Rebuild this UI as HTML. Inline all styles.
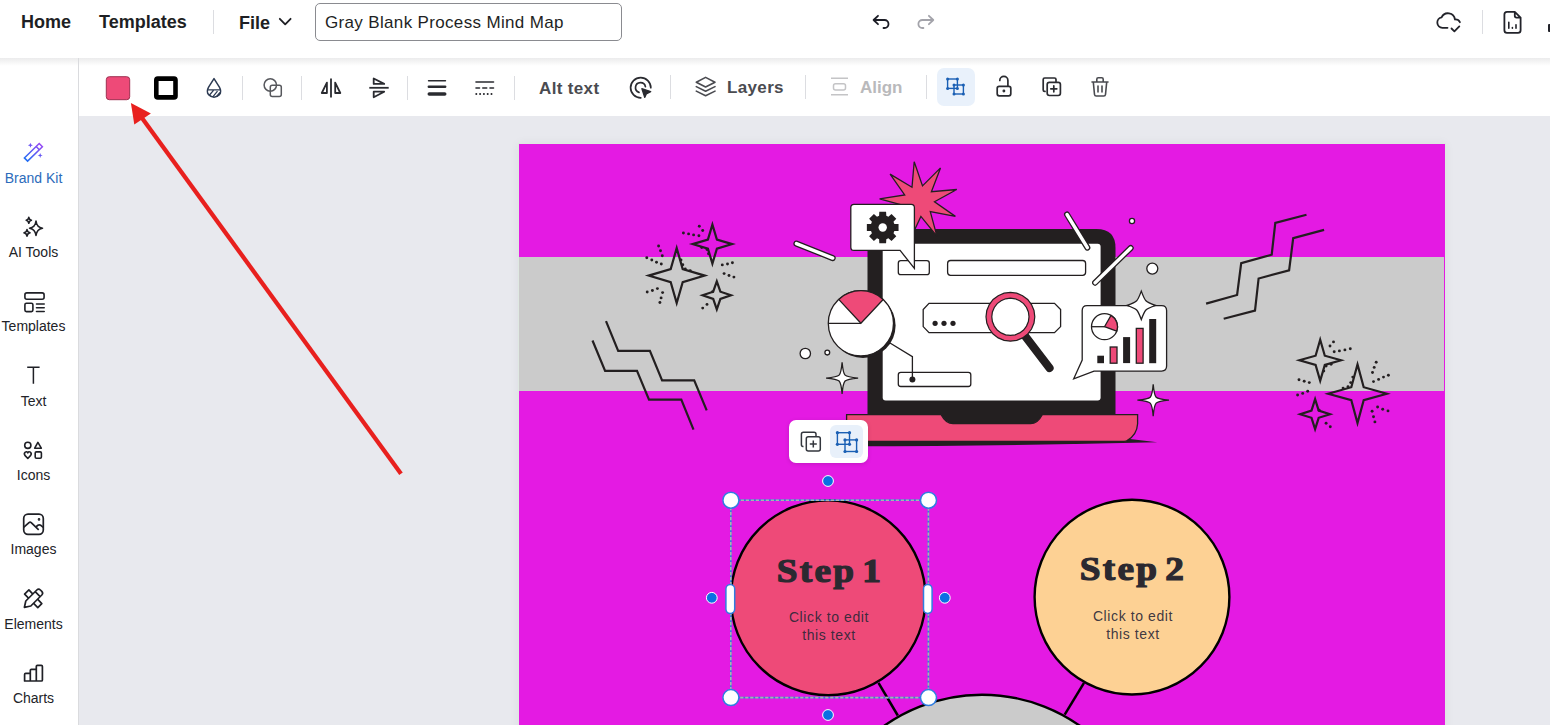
<!DOCTYPE html>
<html><head><meta charset="utf-8">
<style>
*{margin:0;padding:0;box-sizing:border-box}
html,body{width:1550px;height:725px;overflow:hidden;background:#e8e9ee;font-family:"Liberation Sans",sans-serif;position:relative}
.abs{position:absolute}
#top{left:0;top:0;width:1550px;height:58px;background:#fff;z-index:20}
#side{left:0;top:58px;width:79px;height:667px;background:#fff;z-index:19}
#tool{left:79px;top:58px;width:1471px;height:58px;background:#fff;z-index:18}
.nav{font-weight:bold;font-size:18px;color:#1e1f24;top:12px}
.sep{background:#dcdde1;width:1px}
#title{left:315px;top:3px;width:307px;height:38px;border:1px solid #8a8b90;border-radius:5px;font-size:17px;color:#1e1f24;padding-left:9px;line-height:38px;letter-spacing:0.34px}
.lbl{width:67px;text-align:center;font-size:14px;color:#222328;left:0}
.tt{font-weight:bold;font-size:17px;color:#4a4b50;letter-spacing:0.35px}
.stxt{font-family:"Liberation Serif",serif;font-weight:bold;font-size:33px;letter-spacing:2px;word-spacing:-5px;-webkit-text-stroke:1.2px #2b2930;transform:scaleX(1.13);color:#2b2930;text-align:center;width:200px}
.ctxt{font-size:14px;letter-spacing:0.6px;color:rgba(40,38,54,0.9);text-align:center;width:200px;line-height:18px}
</style></head><body>
<div class="abs" style="left:519px;top:144px;width:926px;height:600px;box-shadow:0 0 10px rgba(40,40,60,0.07)"></div>

<svg class="abs" style="left:0;top:0" width="1550" height="725" viewBox="0 0 1550 725">
<defs><clipPath id="ab"><rect x="519" y="144" width="926" height="581"/></clipPath></defs>
<rect x="518.5" y="143.5" width="927" height="590" fill="none" stroke="#dfe8e2" stroke-width="1"/>
<g clip-path="url(#ab)">
<rect x="519" y="144" width="926" height="581" fill="#e41ae3"/>
<rect x="519" y="257" width="925" height="134" fill="#cbcbcb"/>
<!-- zigzags left -->
<g fill="none" stroke="#231f20" stroke-width="2.2" stroke-linejoin="miter">
<path d="M606 321.1 L618.2 350.9 L649.9 350.9 L662.1 380.4 L694.2 380.4 L706.7 410.4"/>
<path d="M592.5 340.5 L605.1 370.9 L637 370.9 L649 399.6 L681.3 399.6 L693.5 429.7"/>
<path d="M1206.1 303.6 L1237.1 295 L1241.2 263.1 L1271.7 254.7 L1275.3 222.9 L1306.5 214.7"/>
<path d="M1223.7 318.8 L1255 310.6 L1258.6 278.5 L1289.1 270.4 L1293.2 238.2 L1324.1 229.9"/>
</g>
<!-- sparkles left -->
<g fill="none" stroke="#231f20" stroke-width="2.2" stroke-linejoin="miter">
<path d="M676.7 248.1 L682.7 269.1 L704.7 275.6 L682.7 282.1 L676.7 303.1 L670.7 282.1 L648.7 275.6 L670.7 269.1Z"/>
<path d="M712.4 224.6 L716.9 239.6 L732.1 244.1 L716.9 248.6 L712.4 263.6 L707.9 248.6 L692.7 244.1 L707.9 239.6Z"/>
<path d="M716.8 281.3 L720.4 291.7 L731.0 295.3 L720.4 298.9 L716.8 309.3 L713.2 298.9 L702.6 295.3 L713.2 291.7Z"/>
<path d="M1320.2 339.8 L1324.8 355.7 L1341.0 360.3 L1324.8 364.9 L1320.2 380.8 L1315.6 364.9 L1299.4 360.3 L1315.6 355.7Z"/>
<path d="M1357.5 364.4 L1363.7 387.2 L1386.8 393.7 L1363.7 400.2 L1357.5 423.0 L1351.3 400.2 L1328.2 393.7 L1351.3 387.2Z"/>
<path d="M1315.1 399.2 L1318.7 410.6 L1330.0 414.2 L1318.7 417.8 L1315.1 429.2 L1311.5 417.8 L1300.2 414.2 L1311.5 410.6Z"/>
</g>
<g fill="#231f20"><circle cx="683.4" cy="233.0" r="1.45"/><circle cx="688.6" cy="233.9" r="1.45"/><circle cx="693.6" cy="234.9" r="1.45"/><circle cx="698.9" cy="235.8" r="1.45"/><circle cx="699.3" cy="226.2" r="1.45"/><circle cx="702.7" cy="230.5" r="1.45"/><circle cx="701.7" cy="247.5" r="1.45"/><circle cx="707.0" cy="249.5" r="1.45"/><circle cx="708.5" cy="253.7" r="1.45"/><circle cx="658.6" cy="246.0" r="1.45"/><circle cx="660.5" cy="250.8" r="1.45"/><circle cx="662.3" cy="255.7" r="1.45"/><circle cx="646.8" cy="257.8" r="1.45"/><circle cx="651.8" cy="260.0" r="1.45"/><circle cx="656.5" cy="262.2" r="1.45"/><circle cx="661.3" cy="264.0" r="1.45"/><circle cx="681.0" cy="260.0" r="1.45"/><circle cx="682.8" cy="264.7" r="1.45"/><circle cx="685.3" cy="269.0" r="1.45"/><circle cx="690.2" cy="270.6" r="1.45"/><circle cx="722.3" cy="264.9" r="1.45"/><circle cx="727.5" cy="264.0" r="1.45"/><circle cx="732.4" cy="262.8" r="1.45"/><circle cx="724.1" cy="273.6" r="1.45"/><circle cx="729.0" cy="275.5" r="1.45"/><circle cx="733.9" cy="277.1" r="1.45"/><circle cx="647.2" cy="292.0" r="1.45"/><circle cx="652.4" cy="290.5" r="1.45"/><circle cx="657.4" cy="288.6" r="1.45"/><circle cx="662.6" cy="292.6" r="1.45"/><circle cx="661.1" cy="297.9" r="1.45"/><circle cx="659.9" cy="302.5" r="1.45"/><circle cx="702.7" cy="308.1" r="1.45"/><circle cx="707.0" cy="304.4" r="1.45"/><circle cx="712.6" cy="291.7" r="1.45"/><circle cx="1333.5" cy="341.9" r="1.45"/><circle cx="1330.0" cy="346.0" r="1.45"/><circle cx="1334.2" cy="351.8" r="1.45"/><circle cx="1339.4" cy="350.9" r="1.45"/><circle cx="1344.9" cy="349.9" r="1.45"/><circle cx="1350.3" cy="348.8" r="1.45"/><circle cx="1331.1" cy="364.2" r="1.45"/><circle cx="1326.1" cy="366.0" r="1.45"/><circle cx="1323.8" cy="371.1" r="1.45"/><circle cx="1376.2" cy="362.3" r="1.45"/><circle cx="1374.2" cy="367.4" r="1.45"/><circle cx="1372.5" cy="372.5" r="1.45"/><circle cx="1373.5" cy="381.6" r="1.45"/><circle cx="1378.6" cy="379.4" r="1.45"/><circle cx="1383.5" cy="377.1" r="1.45"/><circle cx="1388.4" cy="375.3" r="1.45"/><circle cx="1352.8" cy="377.1" r="1.45"/><circle cx="1350.7" cy="382.6" r="1.45"/><circle cx="1348.0" cy="386.7" r="1.45"/><circle cx="1343.1" cy="388.1" r="1.45"/><circle cx="1299.0" cy="379.8" r="1.45"/><circle cx="1304.2" cy="381.2" r="1.45"/><circle cx="1309.3" cy="382.6" r="1.45"/><circle cx="1297.6" cy="395.0" r="1.45"/><circle cx="1302.7" cy="393.4" r="1.45"/><circle cx="1307.7" cy="391.3" r="1.45"/><circle cx="1319.2" cy="410.2" r="1.45"/><circle cx="1377.6" cy="407.0" r="1.45"/><circle cx="1382.7" cy="409.2" r="1.45"/><circle cx="1388.0" cy="410.9" r="1.45"/><circle cx="1372.1" cy="411.2" r="1.45"/><circle cx="1373.5" cy="416.7" r="1.45"/><circle cx="1374.9" cy="421.9" r="1.45"/><circle cx="1326.1" cy="423.3" r="1.45"/><circle cx="1330.3" cy="426.7" r="1.45"/></g>
<!-- laptop body -->
<path d="M886.5 229 H1096.5 Q1115.5 229 1115.5 248 V414 H867.5 V248 Q867.5 229 886.5 229Z" fill="#231f20"/>
<path d="M940 412 H1043.5 L1042.3 414.6 Q1037.5 423.7 1030.5 423.7 H953 Q946 423.7 941.1 414.6Z" fill="#231f20"/>
<rect x="882.7" y="243.7" width="217.9" height="156.7" rx="3" fill="#fff"/>
<!-- starburst -->
<path d="M914.2 161.8 L922.5 185.9 L940.5 167.9 L931.4 191.7 L956.8 189.5 L934.5 201.8 L955.4 216.4 L930.3 211.6 L936.9 236.2 L920.9 216.4 L910.1 239.5 L910.6 214.0 L887.5 224.8 L904.2 205.5 L879.6 198.9 L904.7 194.9 L890.1 174.1 L912.0 187.2Z" fill="#ee4a78" stroke="#231f20" stroke-width="1.3" stroke-linejoin="miter"/>
<!-- base shadow -->
<path d="M850 440 L1128 438.8 L1157.2 442.3 Q1010 445.8 850 446.3Z" fill="#231f20"/>
<path d="M846.6 414.6 H941.1 Q946 423.7 953 423.7 H1030.5 Q1037.5 423.7 1042.3 414.6 H1137.6 V423.7 Q1137 434.5 1127.4 440.4 Q1126.4 441.4 1124 441.4 H846.6Z" fill="#ee4a78" stroke="#231f20" stroke-width="1.3"/>
<!-- screen contents -->
<g fill="#fff" stroke="#231f20" stroke-width="1.3">
<rect x="898.3" y="260.7" width="31" height="14" rx="2.5"/>
<rect x="947.6" y="260.5" width="138" height="14.8" rx="3"/>
<path d="M929 303.4 H1054.5 L1060.6 309.5 V326.6 L1054.5 332.6 H929 L923.2 326.6 V309.5Z"/>
<rect x="898.3" y="372.3" width="72.5" height="14.2" rx="2.5"/>
</g>
<g fill="#231f20"><circle cx="935.1" cy="323.3" r="2.6"/><circle cx="944" cy="323.3" r="2.6"/><circle cx="953" cy="323.3" r="2.6"/></g>
<path d="M890 343 L912.4 356.6 V379.5" fill="none" stroke="#231f20" stroke-width="1.3"/>
<circle cx="912.4" cy="379.5" r="3" fill="#231f20"/>
<!-- magnifier -->
<line x1="1022" y1="332" x2="1049.5" y2="368" stroke="#231f20" stroke-width="8.2" stroke-linecap="round"/>
<path d="M1010.4 292.4 L1016.7 293.2 L1022.6 295.7 L1027.7 299.5 L1031.5 304.6 L1034.0 310.5 L1034.8 316.8 L1034.0 323.1 L1031.5 329.0 L1027.7 334.1 L1022.6 337.9 L1016.7 340.4 L1010.4 341.2 L1004.1 340.4 L998.2 337.9 L993.1 334.1 L989.3 329.0 L986.8 323.1 L986.0 316.8 L986.8 310.5 L989.3 304.6 L993.1 299.5 L998.2 295.7 L1004.1 293.2Z" fill="#ee4a78" stroke="#231f20" stroke-width="1.2"/>
<path d="M1010.4 298.2 L1015.2 298.8 L1019.7 300.7 L1023.6 303.6 L1026.5 307.5 L1028.4 312.0 L1029.0 316.8 L1028.4 321.6 L1026.5 326.1 L1023.6 330.0 L1019.7 332.9 L1015.2 334.8 L1010.4 335.4 L1005.6 334.8 L1001.1 332.9 L997.2 330.0 L994.3 326.1 L992.4 321.6 L991.8 316.8 L992.4 312.0 L994.3 307.5 L997.2 303.6 L1001.1 300.7 L1005.6 298.8Z" fill="#fff" stroke="#231f20" stroke-width="1.2"/>
<!-- pie -->
<circle cx="863" cy="325.5" r="32.6" fill="#231f20"/>
<circle cx="860.9" cy="323.3" r="32.6" fill="#fff" stroke="#231f20" stroke-width="1.3"/>
<path d="M860.9 323.3 L838.7 299.4 A32.6 32.6 0 0 1 883.2 299.5Z" fill="#ee4a78" stroke="#231f20" stroke-width="1.3"/>
<path d="M860.9 323.3 H828.3" stroke="#231f20" stroke-width="1.3"/>
<!-- bubble gear -->
<path d="M854 204.4 H911.2 Q914.4 204.4 914.4 207.6 V268.4 L900.1 250.4 H854 Q850.8 250.4 850.8 247.2 V207.6 Q850.8 204.4 854 204.4Z" fill="#fff" stroke="#231f20" stroke-width="1.3"/>
<path d="M894.36 223.89 L898.54 224.12 L898.54 230.88 L894.36 231.11 L893.49 233.19 L896.29 236.32 L891.52 241.09 L888.39 238.29 L886.31 239.16 L886.08 243.34 L879.32 243.34 L879.09 239.16 L877.01 238.29 L873.88 241.09 L869.11 236.32 L871.91 233.19 L871.04 231.11 L866.86 230.88 L866.86 224.12 L871.04 223.89 L871.91 221.81 L869.11 218.68 L873.88 213.91 L877.01 216.71 L879.09 215.84 L879.32 211.66 L886.08 211.66 L886.31 215.84 L888.39 216.71 L891.52 213.91 L896.29 218.68 L893.49 221.81Z" fill="#231f20"/>
<circle cx="882.7" cy="227.5" r="4.2" fill="#fff"/>
<!-- chart bubble -->
<path d="M1087 305.6 H1161.6 Q1166.6 305.6 1166.6 310.6 V366.1 Q1166.6 371.1 1161.6 371.1 H1094 L1073.7 378.8 L1082.2 360 V310.6 Q1082.2 305.6 1087 305.6Z" fill="#fff" stroke="#231f20" stroke-width="1.3"/>
<path d="M1141.30 291.10 C1145.10 301.50 1145.10 301.50 1155.60 305.30 C1145.10 309.10 1145.10 309.10 1141.30 319.50 C1137.50 309.10 1137.50 309.10 1127.00 305.30 C1137.50 301.50 1137.50 301.50 1141.30 291.10Z" fill="#fff" stroke="#231f20" stroke-width="1.3"/>
<circle cx="1104.5" cy="326.7" r="13" fill="#fff" stroke="#231f20" stroke-width="1.3"/>
<path d="M1104.5 326.7 L1111 315.4 A13 13 0 0 1 1116.7 331.2Z" fill="#ee4a78" stroke="#231f20" stroke-width="1.3"/>
<path d="M1104.5 326.7 L1091.5 326.7" stroke="#231f20" stroke-width="1.3"/>
<rect x="1097.3" y="355.7" width="6.7" height="7.5" fill="#231f20"/>
<rect x="1110.2" y="347" width="6.8" height="16.2" fill="#ee4a78" stroke="#231f20" stroke-width="1.3"/>
<rect x="1123.1" y="337.1" width="7" height="26" fill="#231f20"/>
<rect x="1136.3" y="328.4" width="6.8" height="34.8" fill="#ee4a78" stroke="#231f20" stroke-width="1.3"/>
<rect x="1149.2" y="319" width="7" height="44.2" fill="#231f20"/>
<!-- sticks and circles -->
<g stroke="#231f20" stroke-width="6" stroke-linecap="round"><line x1="796.4" y1="243.6" x2="832.7" y2="258.1"/><line x1="1067" y1="214.5" x2="1087.4" y2="247.6"/><line x1="1130.7" y1="248" x2="1095.1" y2="282.7"/></g>
<g stroke="#fff" stroke-width="3.4" stroke-linecap="round"><line x1="796.4" y1="243.6" x2="832.7" y2="258.1"/><line x1="1067" y1="214.5" x2="1087.4" y2="247.6"/><line x1="1130.7" y1="248" x2="1095.1" y2="282.7"/></g>
<g fill="#fff" stroke="#231f20" stroke-width="1.3">
<circle cx="805.3" cy="353.5" r="5.2"/><circle cx="827.3" cy="352.6" r="2.4"/>
<circle cx="1132" cy="221" r="2.6"/><circle cx="1152.3" cy="268.6" r="5.5"/>
<path d="M842.10 362.30 C843.40 376.80 843.40 376.80 858.10 378.10 C843.40 379.40 843.40 379.40 842.10 393.90 C840.80 379.40 840.80 379.40 826.10 378.10 C840.80 376.80 840.80 376.80 842.10 362.30Z"/>
<path d="M1153.20 384.30 C1154.50 398.90 1154.50 398.90 1169.00 400.20 C1154.50 401.50 1154.50 401.50 1153.20 416.10 C1151.90 401.50 1151.90 401.50 1137.40 400.20 C1151.90 398.90 1151.90 398.90 1153.20 384.30Z"/>
</g>
<!-- bottom circles -->
<g stroke="#000" stroke-width="2.5">
<line x1="878.5" y1="682.8" x2="897.8" y2="715.5"/><line x1="1084" y1="682.8" x2="1064.7" y2="714.7"/>
</g>
<circle cx="982" cy="864" r="169.3" fill="#cbcbcb" stroke="#000" stroke-width="2.4"/>
<circle cx="828.2" cy="597.8" r="97.4" fill="#ee4a78" stroke="#000" stroke-width="2.4"/>
<circle cx="1132" cy="597.1" r="97.4" fill="#fdd194" stroke="#000" stroke-width="2.4"/>
</g>
</svg>
<!-- selection overlay -->
<svg class="abs" style="left:0;top:0;z-index:10" width="1550" height="725">
<rect x="730.8" y="500.2" width="197.6" height="197.4" fill="none" stroke="#2f7de1" stroke-width="1.6"/><rect x="730.8" y="500.2" width="197.6" height="197.4" fill="none" stroke="#aab2ad" stroke-width="1.6" stroke-dasharray="3.2 1.8"/>
<g fill="#0b6fe3" stroke="#fff" stroke-width="1"><circle cx="828" cy="481" r="5.4"/><circle cx="828" cy="715" r="5.4"/><circle cx="711.8" cy="597.8" r="5.4"/><circle cx="944.8" cy="597.8" r="5.4"/></g>
<g fill="#fff" stroke="#2f7de1" stroke-width="1.5">
<circle cx="730.9" cy="500.2" r="8"/><circle cx="928.5" cy="500.2" r="8"/><circle cx="730.9" cy="697.6" r="8"/><circle cx="928.5" cy="697.6" r="8"/>
<rect x="725.9" y="584.6" width="8.8" height="28.8" rx="4.4"/><rect x="923.5" y="584.6" width="8.6" height="28.8" rx="4.3"/>
</g>
</svg>
<div class="abs stxt" style="left:730px;top:553px;z-index:11">Step 1</div>
<div class="abs stxt" style="left:1033px;top:551px;z-index:11">Step 2</div>
<div class="abs ctxt" style="left:729px;top:608px;z-index:11">Click to edit<br>this text</div>
<div class="abs ctxt" style="left:1033px;top:607px;z-index:11">Click to edit<br>this text</div>
<!-- mini toolbar -->
<div class="abs" style="left:789px;top:419.5px;width:79px;height:43px;background:#fff;border-radius:7px;box-shadow:0 1px 4px rgba(0,0,0,0.15);z-index:12">
  <div class="abs" style="left:41px;top:5.5px;width:33px;height:33px;background:#e8f0fa;border-radius:6px"></div>
  <svg class="abs" style="left:0;top:0" width="79" height="43" viewBox="789 419.5 79 43">
   <path d="M803.5 446 H803 Q801.4 446 801.4 444 V433.7 Q801.4 431.7 803.4 431.7 H814 Q816 431.7 816 433.7 V436" fill="none" stroke="#33363d" stroke-width="1.5"/>
   <rect x="806.3" y="436.3" width="14" height="14.3" rx="2" fill="#fff" stroke="#33363d" stroke-width="1.5"/>
   <path d="M813.3 440 V447 M809.8 443.5 H816.8" stroke="#33363d" stroke-width="1.5"/>
   <g fill="none" stroke="#1a5fb4" stroke-width="1.4"><rect x="837.4" y="432.2" width="12.1" height="11.6"/><rect x="845" y="439.4" width="11.6" height="11.6"/></g>
   <g fill="#1a5fb4"><circle cx="837.4" cy="432.2" r="1.6"/><circle cx="849.5" cy="432.2" r="1.6"/><circle cx="837.4" cy="443.8" r="1.6"/><circle cx="849.5" cy="443.8" r="1.6"/><circle cx="845" cy="439.4" r="1.6"/><circle cx="856.6" cy="439.4" r="1.6"/><circle cx="845" cy="451" r="1.6"/><circle cx="856.6" cy="451" r="1.6"/></g>
  </svg>
</div>

<div id="top" class="abs">
  <div class="abs nav" style="left:21px">Home</div>
  <div class="abs nav" style="left:99px">Templates</div>
  <div class="abs sep" style="left:213px;top:10px;height:24px"></div>
  <div class="abs nav" style="left:239px;top:13px">File</div>
  <svg class="abs" style="left:0;top:0" width="1550" height="58">
    <path d="M279.8 18.8 L285.2 24.4 L290.6 18.8" fill="none" stroke="#1e1f24" stroke-width="1.8" stroke-linecap="round" stroke-linejoin="round"/>
    <path d="M878 15.8 L873.6 20 L878 24.2 M873.6 20 H884.5 A4 4 0 0 1 884.5 28 H883.5" fill="none" stroke="#1c1d26" stroke-width="1.8" stroke-linecap="round" stroke-linejoin="round"/>
    <path d="M928.9 15.8 L933.3 20 L928.9 24.2 M933.3 20 H922.4 A4 4 0 0 0 922.4 28 H923.4" fill="none" stroke="#a3a3aa" stroke-width="1.8" stroke-linecap="round" stroke-linejoin="round"/>
    <path d="M1447.5 27.8 H1442.4 A5.3 5.3 0 0 1 1441.6 17.3 A7 7 0 0 1 1454.9 19.5 A5 5 0 0 1 1459.9 22.2" fill="none" stroke="#22232a" stroke-width="1.8" stroke-linecap="round" stroke-linejoin="round"/>
    <path d="M1451.5 28.5 L1454.4 31.3 L1459.3 26.4" fill="none" stroke="#22232a" stroke-width="1.8" stroke-linecap="round" stroke-linejoin="round"/>
    <rect x="1482" y="10" width="1" height="24" fill="#dcdde1"/>
    <path d="M1514.8 11.8 H1507 Q1504.4 11.8 1504.4 14.4 V30.2 Q1504.4 32.8 1507 32.8 H1518 Q1520.6 32.8 1520.6 30.2 V17.6 Z M1514.8 11.8 V15.8 Q1514.8 17.6 1516.6 17.6 H1520.6" fill="none" stroke="#22232a" stroke-width="1.8" stroke-linejoin="round"/>
    <path d="M1508.8 22.3 V28.3 M1512.4 27.5 V28.3 M1516 24.8 V28.3" stroke="#22232a" stroke-width="1.6" stroke-linecap="round"/>
    <rect x="1548" y="24" width="3" height="8" rx="1" fill="#22232a"/>
  </svg>
  <div id="title" class="abs">Gray Blank Process Mind Map</div>
</div>
<div id="side" class="abs">
  <svg class="abs" style="left:0;top:-58px" width="79" height="725">
    <defs><linearGradient id="wg" gradientUnits="userSpaceOnUse" x1="40" y1="143" x2="26" y2="161"><stop offset="0" stop-color="#9a47f4"/><stop offset="1" stop-color="#1d6ff3"/></linearGradient></defs>
    <g fill="none" stroke="url(#wg)" stroke-width="1.5" stroke-linejoin="miter">
      <path d="M39.2 143.5 L42.4 146.7 L27.6 161.1 L24.4 157.9 Z M36.2 146.5 L39.3 149.7"/>
    </g>
    <g fill="url(#wg)"><path d="M30.4 142.8 l0.7 1.8 1.8 0.7 -1.8 0.7 -0.7 1.8 -0.7 -1.8 -1.8 -0.7 1.8 -0.7z"/><path d="M40.2 152.9 l0.7 1.8 1.8 0.7 -1.8 0.7 -0.7 1.8 -0.7 -1.8 -1.8 -0.7 1.8 -0.7z"/></g>
    <g fill="none" stroke="#1f2026" stroke-width="1.6" stroke-linejoin="round">
      <path d="M36 221 Q36.8 227.5 42.5 228.2 Q36.8 229 36 235.5 Q35.2 229 29.5 228.2 Q35.2 227.5 36 221Z"/>
      <path d="M28.8 217.3 Q29.2 219.8 31.4 220.3 Q29.2 220.8 28.8 223.3 Q28.4 220.8 26.2 220.3 Q28.4 219.8 28.8 217.3Z"/>
      <path d="M27 229.5 Q27.4 232.3 30 232.8 Q27.4 233.3 27 236.2 Q26.6 233.3 24 232.8 Q26.6 232.3 27 229.5Z"/>
      <rect x="24.9" y="292.9" width="19.2" height="6.3" rx="2"/>
      <rect x="24.9" y="303.2" width="8" height="8.4" rx="1.5"/>
      <path d="M36.5 304 H44.2 M36.5 307.8 H44.2 M36.5 311.5 H44.2" stroke-linecap="round"/>
      <path d="M27.2 367.3 H39.6 M33.4 367.3 V383.7" stroke-width="1.5"/>
      <circle cx="27.8" cy="445.3" r="3.1"/>
      <path d="M37.9 442.4 L41.3 448.2 H34.7Z"/>
      <path d="M27.8 458.5 L24.9 455.4 Q23.6 453.5 25.3 452.2 Q26.9 451.1 27.8 452.9 Q28.7 451.1 30.3 452.2 Q32 453.5 30.7 455.4Z"/>
      <rect x="35.2" y="451.9" width="6.2" height="6.3" rx="1.2"/>
      <rect x="23.7" y="514.1" width="19.6" height="20.2" rx="4.3" stroke-width="1.7"/>
      <path d="M23.6 527.4 L29 522.6 Q30.1 521.7 31.2 522.6 L38.7 529.8 M36.4 526.5 L37.8 525.3 Q39.3 524.3 40.8 525.3 L43.3 527.4" stroke-width="1.7"/>
      <circle cx="39" cy="519.4" r="0.5" fill="#1f2026"/>
      <path d="M24.6 594.2 L28.9 589.9 L41.8 603.6 L37.8 607.6Z" stroke-width="1.7"/>
      <path d="M24.4 607.3 L25.8 601 L36.8 590 Q38.6 588.3 40.4 590 L41.8 591.4 Q43.5 593.2 41.8 595 L30.8 606 Z M35.2 591.7 L40.1 596.6" fill="#fff" stroke-width="1.7"/>
      <path d="M24.6 681 V674.5 Q24.6 673.4 25.7 673.4 H30.3 V681Z M30.3 681 V670.5 Q30.3 669.4 31.4 669.4 H36.3 V681Z M36.3 681 V666.5 Q36.3 665.4 37.4 665.4 H41.3 Q42.4 665.4 42.4 666.5 V679.9 Q42.4 681 41.3 681Z" stroke-width="1.7"/>
    </g>
  </svg>
  <div class="abs lbl" style="top:112px;color:#2c6bbb">Brand Kit</div>
  <div class="abs lbl" style="top:186px">AI Tools</div>
  <div class="abs lbl" style="top:260px">Templates</div>
  <div class="abs lbl" style="top:335px">Text</div>
  <div class="abs lbl" style="top:409px">Icons</div>
  <div class="abs lbl" style="top:483px">Images</div>
  <div class="abs lbl" style="top:558px">Elements</div>
  <div class="abs lbl" style="top:632px">Charts</div>
</div>
<div id="tool" class="abs">
  <svg class="abs" style="left:-79px;top:-58px" width="1550" height="116">
    <rect x="106.3" y="76.7" width="23.4" height="23" rx="3" fill="#ee4a78" stroke="#9e2f50" stroke-width="1"/>
    <rect x="156.3" y="78.6" width="19.2" height="18.8" rx="1.5" fill="#fff" stroke="#000" stroke-width="4.6"/>
    <path d="M214 78.6 L208.6 87.2 Q206 92 208.6 94.6 Q211.3 97.2 214 97.2 Q216.7 97.2 219.4 94.6 Q222 92 219.4 87.2Z" fill="none" stroke="#2c3a52" stroke-width="1.5" stroke-linejoin="round"/>
    <path d="M207.5 89.8 H220.5 M209.5 95 L213.5 90.3 M212.8 96.8 L217.5 91.2 M216.7 96.5 L220 92.5" stroke="#2c3a52" stroke-width="1.3"/>
    <rect x="242" y="76" width="1" height="24" fill="#dcdde1"/>
    <circle cx="270.3" cy="85" r="6.2" fill="none" stroke="#57585d" stroke-width="1.5"/>
    <rect x="270.3" y="85.2" width="11" height="11.2" rx="2" fill="none" stroke="#57585d" stroke-width="1.5"/>
    <rect x="301" y="76" width="1" height="24" fill="#dcdde1"/>
    <g fill="none" stroke="#2a2b30" stroke-width="1.8" stroke-linejoin="round">
      <path d="M331 78.5 V97.5"/>
      <path d="M321.8 93 L326.9 82.6 V93Z M340.3 93 L335.2 82.6 V93Z"/>
      <path d="M369.3 87.8 H388.7"/>
      <path d="M373.7 78.5 V83.9 H384.2Z M373.7 97.2 V91.7 H384.2Z"/>
    </g>
    <rect x="407" y="76" width="1" height="24" fill="#dcdde1"/>
    <g stroke="#2a2b30" stroke-linecap="round">
      <path d="M428.5 80.7 H445.5" stroke-width="1.4"/>
      <path d="M428.8 86.8 H445.2" stroke-width="2.4"/>
      <path d="M429.3 94 H444.7" stroke-width="3.6"/>
      <path d="M476 82 H493.5" stroke-width="1.6"/>
      <path d="M476 88 H479.5 M482.8 88 H486.7 M490 88 H493.5" stroke-width="1.6"/>
      <path d="M476.2 94 H476.4 M480 94 H480.2 M483.8 94 H484 M487.6 94 H487.8 M491.4 94 H491.6" stroke-width="1.8"/>
    </g>
    <rect x="514" y="76" width="1" height="24" fill="#dcdde1"/>
    <g fill="none" stroke="#2a2b30" stroke-width="1.7" stroke-linecap="round">
      <path d="M650.8 87.7 A10.1 10.1 0 1 0 640.8 97.8"/>
      <path d="M645.4 86.6 A5 5 0 1 0 639 92.4"/>
    </g>
    <path d="M641.9 88.7 L650.7 91.6 L646.3 93.9 L644.7 97.4Z" fill="#2a2b30" stroke="#2a2b30" stroke-width="1.3" stroke-linejoin="round"/>
    <rect x="670" y="75" width="1" height="24" fill="#dcdde1"/>
    <g fill="none" stroke="#4a4b50" stroke-width="1.6" stroke-linejoin="round" stroke-linecap="round">
      <path d="M705.6 77.4 L715 82.2 L705.6 87 L696.3 82.2Z"/>
      <path d="M696.3 86.6 L705.6 91.3 L715 86.6 M696.3 91.1 L705.6 95.8 L715 91.1"/>
    </g>
    <rect x="805" y="75" width="1" height="24" fill="#dcdde1"/>
    <g fill="none" stroke="#c4c4c6" stroke-width="1.5">
      <path d="M831 78.3 H848 M831 94.7 H848"/>
      <rect x="833.5" y="83.8" width="12" height="6.2" rx="2"/>
    </g>
    <rect x="926" y="75" width="1" height="24" fill="#dcdde1"/>
    <rect x="937" y="68" width="38" height="38" rx="7" fill="#e9f1fb"/>
    <g fill="none" stroke="#1a5fb4" stroke-width="1.4"><rect x="947.6" y="79" width="9.8" height="9.4"/><rect x="954" y="85" width="9.4" height="9"/></g>
    <g fill="#1a5fb4"><circle cx="947.6" cy="79" r="1.5"/><circle cx="957.4" cy="79" r="1.5"/><circle cx="947.6" cy="88.4" r="1.5"/><circle cx="957.4" cy="88.4" r="1.5"/><circle cx="954" cy="85" r="1.5"/><circle cx="963.4" cy="85" r="1.5"/><circle cx="954" cy="94" r="1.5"/><circle cx="963.4" cy="94" r="1.5"/></g>
    <g fill="none" stroke="#2a2b30" stroke-width="1.7" stroke-linejoin="round" stroke-linecap="round">
      <rect x="997.2" y="86.4" width="13.6" height="9.4" rx="2"/>
      <path d="M999.8 80.5 A4 4 0 0 1 1007.9 80.5 V85.8"/>
      <circle cx="1003.9" cy="91" r="0.6" fill="#2a2b30"/>
      <path d="M1045 91.4 H1044.7 Q1043.2 91.4 1043.2 89.9 V79.5 Q1043.2 78 1044.7 78 H1054.5 Q1056 78 1056 79.5 V81.7"/>
      <rect x="1047.2" y="82.3" width="13.2" height="13.2" rx="2.2"/>
      <path d="M1053.8 85.8 V91.8 M1050.8 88.8 H1056.8"/>
    </g>
    <g fill="none" stroke="#4a4b50" stroke-width="1.6" stroke-linejoin="round" stroke-linecap="round">
      <path d="M1092 82 H1108 M1096.8 82 V79.2 Q1096.8 77.8 1098.2 77.8 H1101.8 Q1103.2 77.8 1103.2 79.2 V82 M1093.3 82 L1094.5 94.5 Q1094.7 96 1096.2 96 H1103.8 Q1105.3 96 1105.5 94.5 L1106.7 82 M1098 86 V92 M1102 86 V92"/>
    </g>
  </svg>
  <div class="abs tt" style="left:460px;top:21px">Alt text</div>
  <div class="abs tt" style="left:648px;top:20px">Layers</div>
  <div class="abs tt" style="left:781px;top:20px;color:#b9b9bb;letter-spacing:0">Align</div>
</div>
<div class="abs" style="left:0;top:58px;width:1550px;height:8px;background:linear-gradient(#ebebec,rgba(255,255,255,0));z-index:21"></div>
<div class="abs" style="left:78px;top:58px;width:1px;height:667px;background:#dadbde;z-index:22"></div>
<!-- red arrow -->
<svg class="abs" style="left:0;top:0;z-index:30" width="1550" height="725">
  <line x1="401" y1="473.7" x2="142" y2="118" stroke="#e8201e" stroke-width="4.3"/>
  <path d="M130.9 102.9 L134.3 124.4 L150.9 113.4Z" fill="#e8201e"/>
</svg>
</body></html>
